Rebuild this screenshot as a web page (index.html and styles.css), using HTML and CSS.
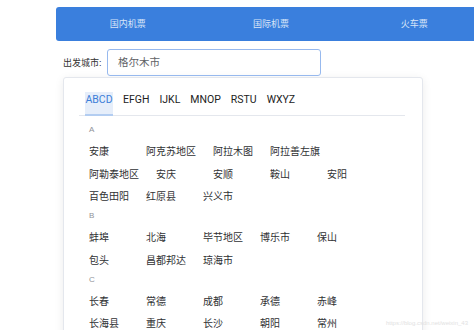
FILE: index.html
```html
<!DOCTYPE html>
<html>
<head>
    <meta charset="utf-8">
    <link rel="stylesheet" href="styles.css">
</head>
<body>
    <div class="page">
        <div class="topbar">
            <div class="topbar-tab">国内机票</div>
            <div class="topbar-tab">国际机票</div>
            <div class="topbar-tab">火车票</div>
        </div>

        <div class="form-row">
            <label class="form-label">出发城市:</label>
            <div class="city-input">格尔木市</div>
        </div>

        <div class="city-panel">
            <div class="letter-tabs">
                <span class="letter-tab active">ABCD</span>
                <span class="letter-tab">EFGH</span>
                <span class="letter-tab">IJKL</span>
                <span class="letter-tab">MNOP</span>
                <span class="letter-tab">RSTU</span>
                <span class="letter-tab">WXYZ</span>
            </div>

            <div class="city-list">
                <div class="group-title">A</div>
                <div class="city-row">
                    <span class="city">安康</span>
                    <span class="city">阿克苏地区</span>
                    <span class="city">阿拉木图</span>
                    <span class="city">阿拉善左旗</span>
                </div>
                <div class="city-row">
                    <span class="city">阿勒泰地区</span>
                    <span class="city">安庆</span>
                    <span class="city">安顺</span>
                    <span class="city">鞍山</span>
                    <span class="city">安阳</span>
                </div>
                <div class="city-row">
                    <span class="city">百色田阳</span>
                    <span class="city">红原县</span>
                    <span class="city">兴义市</span>
                </div>

                <div class="group-title">B</div>
                <div class="city-row">
                    <span class="city">蚌埠</span>
                    <span class="city">北海</span>
                    <span class="city">毕节地区</span>
                    <span class="city">博乐市</span>
                    <span class="city">保山</span>
                </div>
                <div class="city-row">
                    <span class="city">包头</span>
                    <span class="city">昌都邦达</span>
                    <span class="city">琼海市</span>
                </div>

                <div class="group-title">C</div>
                <div class="city-row">
                    <span class="city">长春</span>
                    <span class="city">常德</span>
                    <span class="city">成都</span>
                    <span class="city">承德</span>
                    <span class="city">赤峰</span>
                </div>
                <div class="city-row">
                    <span class="city">长海县</span>
                    <span class="city">重庆</span>
                    <span class="city">长沙</span>
                    <span class="city">朝阳</span>
                    <span class="city">常州</span>
                </div>
            </div>
        </div>

        <div class="watermark">https://blog.csdn.net/weixin_43</div>
    </div>
</body>
</html>
```

FILE: styles.css
```css
body {
    margin: 0;
    overflow: hidden;
    background: #fff;
    font-family: "Liberation Sans", "Noto Sans CJK SC", sans-serif;
    color: #303133;
}

.page {
    position: relative;
    width: 474px;
    height: 330px;
    overflow: hidden;
}

/* top blue bar */
.topbar {
    display: flex;
    width: 430px;
    height: 34px;
    margin: 7px 0 0 56px;
    background: #3a7fdd;
    border-radius: 3px 0 0 3px;
}

.topbar-tab {
    flex: 1;
    text-align: center;
    line-height: 34px;
    font-size: 9px;
    color: #d8e5f8;
}

/* departure city field */
.form-row {
    display: flex;
    align-items: center;
    margin: 8px 0 0 63px;
}

.form-label {
    width: 44px;
    font-size: 9px;
    color: #333;
}

.city-input {
    box-sizing: border-box;
    width: 214px;
    height: 27px;
    padding-left: 10px;
    border: 1px solid #97b9ee;
    border-radius: 3px;
    line-height: 25px;
    font-size: 10.5px;
    color: #606266;
}

/* dropdown panel */
.city-panel {
    box-sizing: border-box;
    width: 360px;
    height: 300px;
    margin: 1px 0 0 63px;
    padding: 14px 17px 0 15px;
    border: 1px solid #e4e7ed;
    border-radius: 3px;
    box-shadow: 0 2px 10px rgba(0, 0, 0, 0.08);
    background: #fff;
}

.letter-tabs {
    display: flex;
    gap: 10px;
    padding-left: 6px;
    border-bottom: 1px solid #e4e7ed;
}

.letter-tab {
    padding: 1px 0 8px;
    line-height: 13px;
    font-family: Roboto, "Liberation Sans", sans-serif;
    font-size: 10.5px;
    color: #222;
    border-bottom: 2px solid transparent;
    margin-bottom: -1px;
}

.letter-tab.active {
    width: 28px;
    text-align: center;
    background: #e6eefa;
    color: #3d7ed8;
    border-bottom-color: #b3cdf1;
}

.city-list {
    padding: 5px 0 0 10px;
}

.group-title {
    height: 18.5px;
    line-height: 18px;
    font-size: 8px;
    color: #909399;
}

.city-row {
    display: flex;
    height: 22.5px;
    align-items: center;
}

.city {
    min-width: 40px;
    margin-right: 17px;
    font-size: 10px;
    color: #303133;
}

.watermark {
    position: absolute;
    right: 6px;
    bottom: 4px;
    font-size: 6px;
    color: #e2e2e2;
}
```
